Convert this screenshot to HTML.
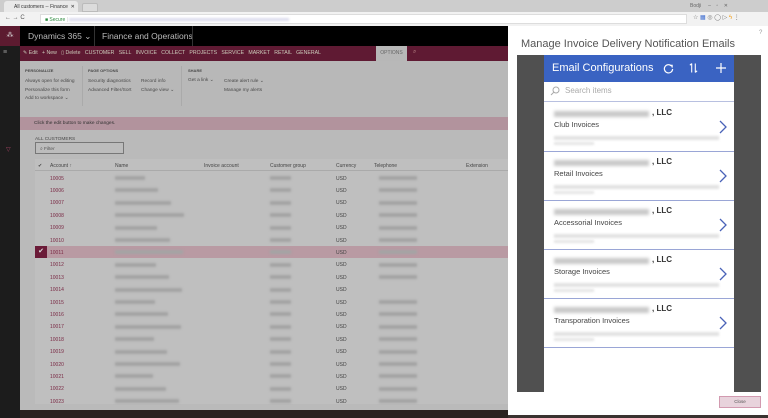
<!DOCTYPE html>
<html><head><meta charset="utf-8"><style>
*{margin:0;padding:0;box-sizing:border-box}
body{width:768px;height:418px;overflow:hidden;position:relative;font-family:"Liberation Sans",sans-serif;background:#bababa}
.a{position:absolute;white-space:nowrap}
.t{font-size:4.8px;color:#4a4a4a}
.row{position:absolute;left:35px;width:473px;height:12px;font-size:5px;color:#444}
.row span{position:absolute;top:3.5px}
.blur{background:#a4a4a4;height:4px;filter:blur(1px);position:absolute;top:4px}
.item{position:absolute;left:544px;width:190px;height:49px;background:#fff;border-bottom:1px solid #9aa6d6}
.nm{position:absolute;left:10px;top:8px;width:95px;height:6px;background:#c8c8c8;filter:blur(1.5px)}
.llc{position:absolute;left:108px;top:5px;font-size:8px;font-weight:bold;color:#333}
.sub{position:absolute;left:10px;top:17px;font-size:7.5px;color:#444}
.em{position:absolute;left:10px;top:33px;width:165px;height:4px;background:#e2e2e2;filter:blur(1px)}
.em2{position:absolute;left:10px;top:39px;width:40px;height:3px;background:#e6e6e6;filter:blur(1px)}
.chev{position:absolute;left:174px;top:16px;width:10px;height:16px}
</style></head><body>
<div class="a" style="left:0;top:0;width:768px;height:12px;background:#cdcdcd"></div>
<div class="a" style="left:4px;top:1px;width:74px;height:11px;background:#e9e9e9;border-radius:3px 3px 0 0;font-size:5px;color:#333;padding:3px 0 0 10px">All customers -- Finance&nbsp;&nbsp;✕</div>
<div class="a" style="left:82px;top:3px;width:16px;height:9px;background:#dcdcdc;border:1px solid #bbb;border-radius:2px 2px 0 0"></div>
<div class="a" style="left:690px;top:3px;font-size:5px;color:#666">Bodji&nbsp;&nbsp;&nbsp;&nbsp;&nbsp;–&nbsp;&nbsp;&nbsp;&nbsp;▫&nbsp;&nbsp;&nbsp;&nbsp;✕</div>
<div class="a" style="left:0;top:12px;width:768px;height:14px;background:#f2f2f2"></div>
<div class="a" style="left:5px;top:15px;font-size:6px;color:#555">←&nbsp;→&nbsp;C</div>
<div class="a" style="left:40px;top:14px;width:647px;height:10px;background:#fff;border:1px solid #ddd;font-size:5px;color:#2b8a3e;padding:2px 0 0 4px">■ Secure <span style="color:#ccc">|</span> <span style="display:inline-block;width:220px;height:3px;background:#dde;filter:blur(1px)"></span></div>
<div class="a" style="left:693px;top:14px;font-size:6px;color:#777">☆ <span style="color:#3b6bd0">▦</span> ◎ ◯ ▷ <span style="color:#f39c12">ϟ</span> ⋮</div>
<div class="a" style="left:0;top:26px;width:20px;height:392px;background:#1c1c1c"></div>
<div class="a" style="left:0;top:26px;width:20px;height:20px;background:#5c1b30;color:#ddd;font-size:7px;text-align:center;line-height:20px">⁂</div>
<div class="a" style="left:20px;top:26px;width:488px;height:20px;background:#000"></div>
<div class="a" style="left:28px;top:31px;font-size:8.5px;color:#bbb">Dynamics 365 ⌄</div>
<div class="a" style="left:94px;top:26px;width:1px;height:20px;background:#333"></div>
<div class="a" style="left:102px;top:31px;font-size:8.5px;color:#bbb">Finance and Operations</div>
<div class="a" style="left:192px;top:26px;width:1px;height:20px;background:#333"></div>
<div class="a" style="left:3px;top:49px;font-size:7px;color:#999">≡</div>
<div class="a" style="left:20px;top:46px;width:488px;height:15px;background:#5f1a33"></div>
<div class="a" style="left:23px;top:50px;font-size:5.2px;color:#ccb">✎ Edit &nbsp;&nbsp;+ New &nbsp;&nbsp;▯ Delete &nbsp;&nbsp;CUSTOMER &nbsp;&nbsp;SELL &nbsp;&nbsp;INVOICE &nbsp;&nbsp;COLLECT &nbsp;&nbsp;PROJECTS &nbsp;&nbsp;SERVICE &nbsp;&nbsp;MARKET &nbsp;&nbsp;RETAIL &nbsp;&nbsp;GENERAL</div>
<div class="a" style="left:376px;top:46px;width:31px;height:15px;background:#b7b7b7;font-size:5px;color:#666;text-align:center;line-height:15px">OPTIONS</div>
<div class="a" style="left:413px;top:49px;font-size:6px;color:#b88">⌕</div>
<div class="a" style="left:20px;top:61px;width:488px;height:56px;background:#b8b8b8"></div>
<div class="a t" style="left:25px;top:68px;font-weight:bold;font-size:4px">PERSONALIZE</div>
<div class="a t" style="left:25px;top:78px;line-height:8.7px">Always open for editing<br>Personalize this form<br>Add to workspace ⌄</div>
<div class="a" style="left:82px;top:66px;width:1px;height:40px;background:#aaa"></div>
<div class="a t" style="left:88px;top:68px;font-weight:bold;font-size:4px">PAGE OPTIONS</div>
<div class="a t" style="left:88px;top:78px;line-height:8.7px">Security diagnostics<br>Advanced Filter/Sort</div>
<div class="a t" style="left:141px;top:78px;line-height:8.7px">Record info<br>Change view ⌄</div>
<div class="a" style="left:181px;top:66px;width:1px;height:40px;background:#aaa"></div>
<div class="a t" style="left:188px;top:68px;font-weight:bold;font-size:4px">SHARE</div>
<div class="a t" style="left:188px;top:78px">Get a link ⌄</div>
<div class="a t" style="left:224px;top:78px;line-height:8.7px">Create alert rule ⌄<br>Manage my alerts</div>
<div class="a" style="left:20px;top:117px;width:488px;height:13px;background:#b2939d"></div>
<div class="a t" style="left:34px;top:121px;color:#333">Click the edit button to make changes.</div>
<div class="a" style="left:6px;top:146px;font-size:6px;color:#a46">▽</div>
<div class="a t" style="left:35px;top:137px">ALL CUSTOMERS</div>
<div class="a" style="left:35px;top:142px;width:89px;height:12px;border:1px solid #777;background:#bcbcbc;font-size:4.8px;color:#555;padding:3px 0 0 4px">⌕ Filter</div>
<div class="a" style="left:35px;top:159px;width:473px;height:245px;background:#bfbfbf"></div>
<div class="row" style="top:159px;border-bottom:1px solid #aaa"><span style="left:3px">✔</span><span style="left:15px">Account ↑</span><span style="left:80px">Name</span><span style="left:169px">Invoice account</span><span style="left:235px">Customer group</span><span style="left:301px">Currency</span><span style="left:339px">Telephone</span><span style="left:431px">Extension</span></div>
<div id="rows"></div>
<script>
var h='';for(var i=0;i<19;i++){var y=172+i*12.4,sel=i==6;
h+='<div class="row" style="top:'+y+'px;'+(sel?'background:#b99aa3;':'')+'">'+(sel?'<div style="position:absolute;left:0;top:0;width:12px;height:12px;background:#6b1b38;color:#ddd;font-size:7px;text-align:center;line-height:12px">✔</div>':'')+'<span style="left:15px;color:#7a2a45">'+(10005+i)+'</span><div class="blur" style="left:80px;width:'+(30+(i*13)%40)+'px"></div><div class="blur" style="left:235px;width:21px"></div><span style="left:301px">USD</span>'+(i==9?'':'<div class="blur" style="left:344px;width:38px"></div>')+'</div>';}
document.getElementById('rows').innerHTML=h;
</script>
<div class="a" style="left:20px;top:410px;width:488px;height:8px;background:#2a2320"></div>
<div class="a" style="left:508px;top:26px;width:260px;height:392px;background:#fff"></div>
<div class="a" style="left:521px;top:38px;font-size:11px;color:#555">Manage Invoice Delivery Notification Emails</div>
<div class="a" style="left:759px;top:30px;font-size:6px;color:#999">?</div>
<div class="a" style="left:517px;top:55px;width:244px;height:337px;background:#505050"></div>
<div class="a" style="left:544px;top:55px;width:190px;height:337px;background:#fff"></div>
<div class="a" style="left:544px;top:55px;width:190px;height:27px;background:#3a63c2"></div>
<div class="a" style="left:552px;top:62px;font-size:11px;color:#fff">Email Configurations</div>
<svg class="a" style="left:663px;top:63px" width="11" height="11" viewBox="0 0 12 12"><path d="M9.5 3.5A4.5 4.5 0 1 0 10.5 6.5" fill="none" stroke="#fff" stroke-width="1.3"/><path d="M7.5 2.5L10 2.5 10 5" fill="none" stroke="#fff" stroke-width="1.2"/></svg>
<svg class="a" style="left:689px;top:62px" width="9" height="12" viewBox="0 0 10 12"><path d="M3 11V1M1 3L3 1M7 1V11M9 9L7 11" fill="none" stroke="#fff" stroke-width="1.2"/></svg>
<svg class="a" style="left:715px;top:62px" width="12" height="12" viewBox="0 0 12 12"><path d="M6 1V11M1 6H11" stroke="#fff" stroke-width="1.2"/></svg>
<div class="a" style="left:544px;top:82px;width:190px;height:20px;background:#fff;border-bottom:1px solid #b8c0e0"></div>
<svg class="a" style="left:550px;top:86px" width="10" height="10" viewBox="0 0 10 10"><circle cx="6" cy="4" r="3" fill="none" stroke="#aaa"/><path d="M4 6L1 9" stroke="#aaa"/></svg>
<div class="a" style="left:565px;top:86px;font-size:8px;color:#aaa">Search items</div>
<div id="items"></div>
<script>
var n=['Club Invoices','Retail Invoices','Accessorial Invoices','Storage Invoices','Transporation Invoices'],s='';
for(var i=0;i<5;i++){s+='<div class="item" style="top:'+(103+i*49)+'px"><div class="nm"></div><div class="llc">, LLC</div><div class="sub">'+n[i]+'</div><div class="em"></div><div class="em2"></div><svg class="chev" viewBox="0 0 10 16"><path d="M2 2L8 8 2 14" fill="none" stroke="#4a63b8" stroke-width="1.3"/></svg></div>';}
document.getElementById('items').innerHTML=s;
</script>
<div class="a" style="left:719px;top:396px;width:42px;height:12px;background:#e8d3dc;border:1px solid #d29ab0;font-size:4.5px;color:#555;text-align:center;line-height:10px">Close</div>
<div class="a" style="left:508px;top:415px;width:260px;height:3px;background:#3a3330"></div>
</body></html>
